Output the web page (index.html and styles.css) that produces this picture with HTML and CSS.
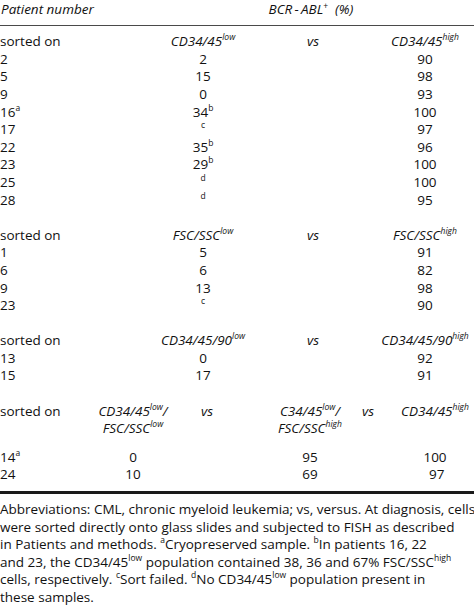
FILE: index.html
```html
<!DOCTYPE html>
<html>
<head>
<meta charset="utf-8">
<link rel="stylesheet" href="styles.css">
</head>
<body>
<div class="table">
  <div class="head">
    <div class="pn">Patient number</div>
    <div class="title">BCR&thinsp;-&thinsp;ABL<span class="sup up plus">+</span>&nbsp; (%)</div>
  </div>

  <div class="grp four first">
    <div class="lbl">sorted on</div><div class="c it">CD34/45<span class="sup">low</span></div><div class="c it vs">vs</div><div class="c it">CD34/45<span class="sup">high</span></div>
    <div>2</div><div class="c">2</div><div></div><div class="c">90</div>
    <div>5</div><div class="c">15</div><div></div><div class="c">98</div>
    <div>9</div><div class="c">0</div><div></div><div class="c">93</div>
    <div>16<span class="sup up">a</span></div><div class="c">34<span class="sup up">b</span></div><div></div><div class="c">100</div>
    <div>17</div><div class="c"><span class="sup up">c</span></div><div></div><div class="c">97</div>
    <div>22</div><div class="c">35<span class="sup up">b</span></div><div></div><div class="c">96</div>
    <div>23</div><div class="c">29<span class="sup up">b</span></div><div></div><div class="c">100</div>
    <div>25</div><div class="c"><span class="sup up">d</span></div><div></div><div class="c">100</div>
    <div>28</div><div class="c"><span class="sup up">d</span></div><div></div><div class="c">95</div>
  </div>

  <div class="grp four">
    <div class="lbl">sorted on</div><div class="c it">FSC/SSC<span class="sup">low</span></div><div class="c it vs">vs</div><div class="c it">FSC/SSC<span class="sup">high</span></div>
    <div>1</div><div class="c">5</div><div></div><div class="c">91</div>
    <div>6</div><div class="c">6</div><div></div><div class="c">82</div>
    <div>9</div><div class="c">13</div><div></div><div class="c">98</div>
    <div>23</div><div class="c"><span class="sup up">c</span></div><div></div><div class="c">90</div>
  </div>

  <div class="grp four">
    <div class="lbl">sorted on</div><div class="c it">CD34/45/90<span class="sup">low</span></div><div class="c it vs">vs</div><div class="c it">CD34/45/90<span class="sup">high</span></div>
    <div>13</div><div class="c">0</div><div></div><div class="c">92</div>
    <div>15</div><div class="c">17</div><div></div><div class="c">91</div>
  </div>

  <div class="grp six">
    <div class="lbl hd">sorted on</div><div class="c it hd">CD34/45<span class="sup">low</span>/<br>FSC/SSC<span class="sup">low</span></div><div class="c it hd">vs</div><div class="c it hd c4">C34/45<span class="sup">low</span>/<br>FSC/SSC<span class="sup">high</span></div><div class="c it hd">vs</div><div class="c it hd c6">CD34/45<span class="sup">high</span></div>
    <div>14<span class="sup up">a</span></div><div class="c">0</div><div></div><div class="c c4">95</div><div></div><div class="c c6">100</div>
    <div>24</div><div class="c">10</div><div></div><div class="c c4">69</div><div></div><div class="c c6">&nbsp;97</div>
  </div>
</div>

<p class="notes">Abbreviations: CML, chronic myeloid leukemia; vs, versus. At diagnosis, cells<br>were sorted directly onto glass slides and subjected to FISH as described<br>in Patients and methods. <span class="sup up">a</span>Cryopreserved sample. <span class="sup up">b</span>In patients 16, 22<br>and 23, the CD34/45<span class="sup up">low</span> population contained 38, 36 and 67% FSC/SSC<span class="sup up">high</span><br>cells, respectively. <span class="sup up">c</span>Sort failed. <span class="sup up">d</span>No CD34/45<span class="sup up">low</span> population present in<br>these samples.</p>
</body>
</html>
```

FILE: styles.css
```css
html, body {
  margin: 0;
  padding: 0;
  background: #ffffff;
  overflow: hidden;
}
body {
  width: 474px;
  font-family: "Open Sans", Lato, sans-serif;
  font-size: 13.5px;
  line-height: 17.6px;
  color: #111111;
}
.table {
  border-bottom: 3px solid #1a1a1a;
  padding-bottom: 7px;
}
.head {
  display: grid;
  grid-template-columns: 148px 326px;
  border-bottom: 1px solid #4a4a4a;
  padding-top: 1px;
  padding-bottom: 6px;
  font-style: italic;
}
.pn {
  padding-left: 1px;
}
.title {
  text-align: center;
}
.grp {
  display: grid;
  white-space: nowrap;
  margin-top: 17.6px;
}
.grp.first {
  margin-top: 7.6px;
}
.four {
  grid-template-columns: 148px 110px 118px 98px;
}
.six {
  grid-template-columns: 96px 74px 74px 108px 32px 90px;
}
.c {
  text-align: center;
}
.it {
  font-style: italic;
}
.vs {
  padding-right: 8px;
}
.hd {
  padding-bottom: 11px;
}
.c4 {
  padding-left: 24px;
}
.c6 {
  padding-left: 12px;
}
.sup {
  font-size: 8.5px;
  line-height: 0;
  vertical-align: 6px;
}
.plus {
  vertical-align: 5px;
}
.up {
  font-style: normal;
}
.notes {
  margin: 7px 0 0 0;
  line-height: 17.5px;
  white-space: nowrap;
}
```
